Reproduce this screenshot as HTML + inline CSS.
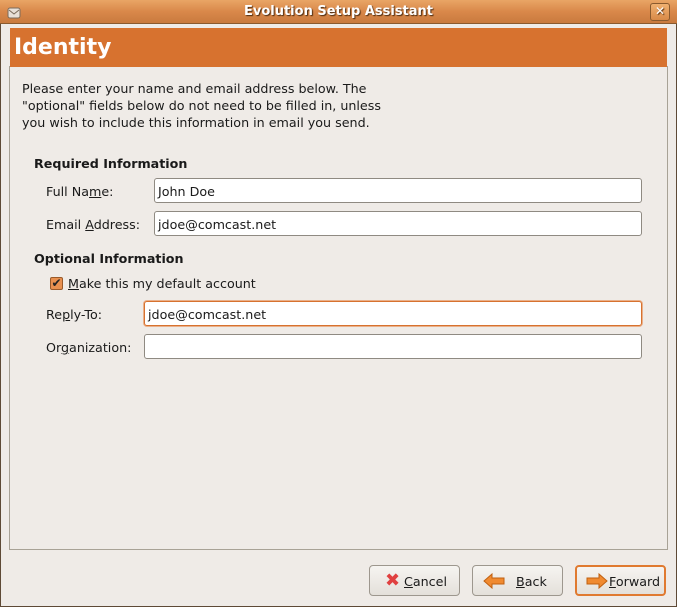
<!DOCTYPE html>
<html><head><style>
*{margin:0;padding:0;box-sizing:border-box}
body{width:677px;height:607px;background:#efebe7;font-family:"DejaVu Sans","Liberation Sans",sans-serif;font-size:12.7px;color:#1a1a1a;position:relative;overflow:hidden}
.win{position:absolute;left:0;top:0;width:677px;height:607px;border:1px solid #5e4a36;border-top:none}
.tb{position:absolute;left:0;top:0;width:677px;height:24px;background:linear-gradient(#e9a565,#d9884a 50%,#c97a3e);border-bottom:1px solid #8a5a2e;color:#fff;font-weight:bold;font-size:13px;text-align:center;line-height:23px;text-shadow:1px 1px 1px #4a2a10}
.close{position:absolute;right:7px;top:3px;width:20px;height:18px;border:1px solid #8a5a2e;border-radius:3px;background:linear-gradient(#f0b070,#d88a48);font-size:12px;line-height:15px}
.hdr{position:absolute;left:10px;top:28px;width:657px;height:39px;background:#d7722f;color:#fff;font-weight:bold;font-size:22px;line-height:40px;padding-left:4px}
.frame{position:absolute;left:9px;top:66px;width:659px;height:484px;border:1px solid #a8a296;border-top:none}
.t{position:absolute;white-space:nowrap}
.b{font-weight:bold}
.in{position:absolute;height:25px;background:#fff;border:1px solid #8f8a82;border-radius:3px;padding-left:3px;line-height:25px}
.btn{position:absolute;top:565px;height:31px;border:1px solid #9d978e;border-radius:4px;background:linear-gradient(#f6f4f1,#e4e0da);line-height:29px;font-size:12.7px}
u{text-decoration:underline}
</style></head><body>
<div class="win"></div>
<div class="tb">Evolution Setup Assistant<div class="close">✕</div>
<svg style="position:absolute;left:7px;top:5px" width="14" height="14"><rect x="1" y="3" width="12" height="10" rx="2" fill="#e8e0d8" stroke="#7a6a5a"/><path d="M2 5l5 4 5-4" stroke="#7a6a5a" fill="none"/></svg></div>
<div class="hdr">Identity</div>
<div class="frame"></div>
<div class="t" style="left:22px;top:80px;line-height:17px">Please enter your name and email address below. The<br>"optional" fields below do not need to be filled in, unless<br>you wish to include this information in email you send.</div>
<div class="t b" style="left:34px;top:156px">Required Information</div>
<div class="t" style="left:46px;top:184px">Full Na<u>m</u>e:</div>
<div class="in" style="left:154px;top:178px;width:488px">John Doe</div>
<div class="t" style="left:46px;top:217px">Email <u>A</u>ddress:</div>
<div class="in" style="left:154px;top:211px;width:488px">jdoe@comcast.net</div>
<div class="t b" style="left:34px;top:251px">Optional Information</div>
<div style="position:absolute;left:50px;top:277px;width:13px;height:13px;border:1px solid #9a5a2a;background:#e89050;border-radius:2px;color:#222;font-size:12px;line-height:11px;text-align:center">✔</div>
<div class="t" style="left:68px;top:276px"><u>M</u>ake this my default account</div>
<div class="t" style="left:46px;top:307px">Re<u>p</u>ly-To:</div>
<div class="in" style="left:144px;top:301px;width:498px;border-color:#d7722f;box-shadow:0 0 0 1px #eab08a">jdoe@comcast.net</div>
<div class="t" style="left:46px;top:340px">Or<u>g</u>anization:</div>
<div class="in" style="left:144px;top:334px;width:498px"></div>
<div class="btn" style="left:369px;width:91px;padding-left:34px;line-height:31px"><span style="position:absolute;left:15px;top:0;color:#e04040;font-weight:bold;font-size:18px;line-height:29px">✖</span><u>C</u>ancel</div>
<div class="btn" style="left:472px;width:91px;padding-left:43px;line-height:31px"><svg style="position:absolute;left:10px;top:7px" width="22" height="16"><path d="M1 8l8-7v4h12v6H9v4z" fill="#f08a30" stroke="#c06010"/></svg><u>B</u>ack</div>
<div class="btn" style="left:575px;width:91px;padding-left:32px;border:2px solid #e07a30;line-height:29px"><svg style="position:absolute;left:9px;top:6px" width="22" height="16"><path d="M21 8l-8-7v4H1v6h12v4z" fill="#f08a30" stroke="#c06010"/></svg><u>F</u>orward</div>
</body></html>
